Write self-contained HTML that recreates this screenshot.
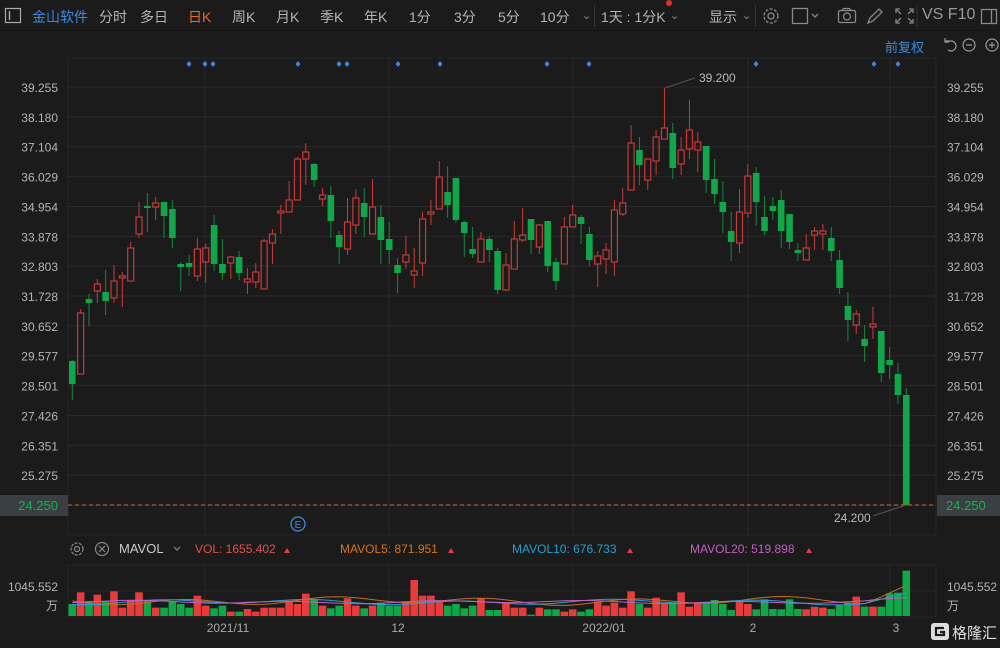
<!DOCTYPE html>
<html><head><meta charset="utf-8"><style>
*{margin:0;padding:0;box-sizing:border-box}
body{width:1000px;height:648px;background:#1b1b1b;overflow:hidden;font-family:"Liberation Sans","Noto Sans CJK SC",sans-serif;position:relative;color:#b4b4b4}
.top{position:absolute;left:0;top:0;width:1000px;height:31px;background:#1b1b1b;border-bottom:1px solid #141414;font-size:14px}
.top span{position:absolute;top:7px;white-space:nowrap}
.sep{position:absolute;top:5px;width:1px;height:22px;background:#333}
svg{position:absolute;left:0;top:0}
</style></head><body>
<div class="top">
<svg width="24" height="31" style="left:0"><rect x="5.5" y="8.5" width="15" height="14" fill="none" stroke="#aaa" stroke-width="1.2"/><line x1="9.5" y1="11" x2="9.5" y2="20" stroke="#aaa" stroke-width="1.4"/></svg>
<span style="left:32px;color:#3d8ae0">金山软件</span>
<span style="left:99px">分时</span><span style="left:140px">多日</span>
<span style="left:188px;color:#ee6a1c">日K</span>
<span style="left:232px">周K</span><span style="left:276px">月K</span><span style="left:320px">季K</span><span style="left:364px">年K</span>
<span style="left:409px">1分</span><span style="left:454px">3分</span><span style="left:498px">5分</span><span style="left:540px">10分</span>
<span style="left:582px;color:#888;font-size:11px;top:9px">⌄</span>
<div class="sep" style="left:594px"></div>
<span style="left:601px">1天 : 1分K</span><span style="left:670px;color:#888;font-size:11px;top:9px">⌄</span>
<div style="position:absolute;left:666px;top:0;width:6px;height:6px;border-radius:3px;background:#e03030"></div>
<span style="left:709px">显示</span><span style="left:742px;color:#888;font-size:11px;top:9px">⌄</span>
<div class="sep" style="left:755px"></div>
<svg width="1000" height="31">
<g fill="none" stroke="#888" stroke-width="1.3">
<circle cx="771" cy="16" r="3"/><circle cx="771" cy="16" r="7" stroke-dasharray="3 1.5"/>
<rect x="792.5" y="8.5" width="15" height="15"/><path d="M812 14l3 3 3-3"/>
<rect x="838.5" y="10.5" width="17" height="12" rx="1.5"/><circle cx="847" cy="16.5" r="3.5"/><path d="M842 10.5l1.5-2h6l1.5 2"/>
<path d="M868 23l2-5 9-9 3 3-9 9z"/>
<path d="M896 13v-4h4M909 9h4v4M896 19v4h4M913 19v4h-4M897 10l4 4M912 10l-4 4M897 22l4-4M912 22l-4-4"/>
<rect x="981.5" y="9.5" width="15" height="14"/><line x1="991.5" y1="10" x2="991.5" y2="23"/>
</g><line x1="917" y1="5" x2="917" y2="27" stroke="#333"/></svg>
<span style="left:922px;font-size:16px;top:6px;color:#999">VS F10</span>
</div>
<div style="position:absolute;left:885px;top:37px;font-size:13px;color:#3d8ae0">前复权</div>
<svg width="1000" height="648" id="s"></svg>
<script>
var NS="http://www.w3.org/2000/svg",s=document.getElementById('s'),h='';
function t(x,y,txt,c,a,fs){h+='<text x="'+x+'" y="'+y+'" fill="'+(c||'#b4b4b4')+'" font-size="'+(fs||12)+'" text-anchor="'+(a||'start')+'" font-family="Liberation Sans, Noto Sans CJK SC, sans-serif">'+txt+'</text>';}
// icons top right
h+='<g fill="none" stroke="#999" stroke-width="1.2"><path d="M945 41h6a5 5 0 1 1-3 9"/><path d="M945 38v4h4"/><circle cx="969" cy="45" r="6"/><path d="M966 45h6"/><circle cx="992" cy="45" r="6"/><path d="M989 45h6M992 42v6"/></g>';
// panel borders
h+='<rect x="68" y="58" width="868" height="477" fill="none" stroke="#262626"/>';
h+='<rect x="68" y="565" width="868" height="52" fill="none" stroke="#262626"/>';
var labs=['39.255','38.180','37.104','36.029','34.954','33.878','32.803','31.728','30.652','29.577','28.501','27.426','26.351','25.275'];
for(var i=0;i<labs.length;i++){var y=87+i*29.86;h+='<line x1="68" y1="'+y+'" x2="936" y2="'+y+'" stroke="#2a2a2a"/>';t(58,y+5,labs[i],'#b4b4b4','end');t(947,y+5,labs[i]);}
h+='<line x1="68" y1="505" x2="936" y2="505" stroke="#2a2a2a"/>';
[205,389,573,748,890].forEach(function(x){h+='<line x1="'+x+'" y1="58" x2="'+x+'" y2="535" stroke="#2a2a2a"/><line x1="'+x+'" y1="565" x2="'+x+'" y2="617" stroke="#2a2a2a"/>';});
h+='<line x1="68" y1="591" x2="936" y2="591" stroke="#262626"/>';
// diamonds
[189,205,213,298,339,347,398,440,547,589,756,874,898].forEach(function(x){h+='<path d="M'+x+' 61l2.5 3-2.5 3-2.5-3z" fill="#3d8ae0"/>';});
// candles: [type, bodyTop, bodyBot, wickTop, wickBot]
var C=[['g',361,384,360,400],['r',313,374,309,374],['g',299,303,294,326],['r',284,291,279,303],['g',292,301,270,315],['r',281,298,265,303],['r',276,278,272,307],['r',248,281,242,281],['r',217,234,202,238],['g',206,208,193,232],['r',203,207,197,220],['g',202,216,202,238],['g',209,238,200,248],['g',264,267,262,291],['g',263,267,255,276],['r',249,276,238,281],['r',248,262,244,283],['g',225,264,215,271],['g',264,273,239,280],['r',257,263,256,279],['g',257,273,251,280],['r',279,282,268,294],['r',272,282,263,288],['r',241,289,239,289],['r',234,243,229,264],['r',211,213,205,234],['r',200,212,181,212],['r',159,200,157,200],['r',152,159,143,185],['g',164,180,163,187],['r',195,199,188,206],['g',195,221,186,238],['g',235,247,231,264],['r',222,249,198,255],['r',198,225,189,234],['g',203,217,188,237],['r',207,234,179,234],['g',217,240,205,264],['g',239,250,222,264],['g',265,273,258,293],['r',255,262,236,269],['r',271,275,248,288],['r',219,263,212,276],['r',212,214,200,225],['r',177,209,161,209],['g',192,205,166,218],['g',178,220,178,223],['g',222,233,221,257],['g',249,254,227,258],['r',239,262,232,262],['g',239,250,236,262],['g',251,290,248,294],['r',265,290,253,291],['r',239,269,221,269],['r',235,240,208,242],['g',219,240,219,254],['r',225,247,224,254],['g',221,266,221,272],['g',262,281,258,290],['r',227,264,217,264],['r',215,227,205,227],['g',217,224,215,244],['g',234,260,227,266],['r',256,264,251,287],['r',250,259,243,274],['r',210,262,200,276],['r',203,214,188,216],['r',143,190,125,190],['g',150,165,137,185],['r',159,180,159,190],['r',137,161,130,175],['r',128,139,88,139],['g',133,168,123,179],['r',150,164,137,175],['r',130,149,100,159],['r',142,150,132,172],['g',146,180,146,193],['g',179,194,159,204],['g',202,212,181,233],['g',231,242,212,261],['r',212,243,189,253],['r',176,213,164,218],['g',173,202,167,226],['g',217,231,196,235],['g',206,211,197,220],['g',200,231,190,248],['g',214,242,214,249],['g',250,253,243,261],['r',248,260,234,260],['r',231,235,227,250],['r',231,234,224,250],['g',238,251,227,261],['g',260,288,250,294],['g',306,320,292,341],['r',314,325,310,334],['g',339,346,325,362],['r',324,327,307,339],['g',331,373,331,382],['g',360,365,347,379],['g',374,395,363,404],['g',395,505,388,505]];
var V=[222,187,213,194,213,184,233,210,187,210,233,233,215,222,233,197,227,235,227,245,245,237,245,233,233,233,215,222,191,208,227,235,227,205,227,235,227,218,227,227,215,150,197,197,212,227,222,235,227,205,240,240,218,233,233,254,233,238,238,245,238,245,238,215,227,218,233,184,222,233,203,222,218,187,230,220,218,210,222,240,212,222,238,208,237,238,208,237,238,230,233,237,225,218,200,230,230,230,190,188,122];
var G='#12a64a',R='#e83c3c',RC='#c83a3a';
for(var i=0;i<C.length;i++){var c=C[i],x=72.3+i*8.34;
 if(c[0]=='g'){h+='<line x1="'+x+'" y1="'+c[3]+'" x2="'+x+'" y2="'+c[4]+'" stroke="#15883f"/><rect x="'+(x-3.3)+'" y="'+c[1]+'" width="6.6" height="'+Math.max(2,c[2]-c[1])+'" fill="'+G+'"/>';}
 else{h+='<line x1="'+x+'" y1="'+c[3]+'" x2="'+x+'" y2="'+c[1]+'" stroke="'+RC+'"/><line x1="'+x+'" y1="'+c[2]+'" x2="'+x+'" y2="'+c[4]+'" stroke="'+RC+'"/><rect x="'+(x-3)+'" y="'+c[1]+'" width="6" height="'+Math.max(1.5,c[2]-c[1])+'" fill="none" stroke="'+RC+'" stroke-width="1.2"/>';}
 var vt=530+V[i]/3;h+='<rect x="'+(x-3.8)+'" y="'+vt+'" width="7.6" height="'+(616-vt)+'" fill="'+(c[0]=='g'?G:R)+'"/>';}
// MA lines
function ml(col,base,amp,ph,end){var p=[];for(var i=0;i<101;i++){var x=72.3+i*8.34;var y=base+amp*Math.sin(i*0.35+ph)+amp*0.5*Math.sin(i*0.13+ph*2);if(i>95)y-= (i-95)*end;p.push(x.toFixed(1)+','+y.toFixed(1));}h+='<polyline points="'+p.join(' ')+'" fill="none" stroke="'+col+'" stroke-width="1"/>';}
ml('#c07020',601,3,0,3);ml('#2a9fd0',602,2,1,1.5);ml('#c060c0',602,1.2,2,0.6);
// price line
h+='<line x1="68" y1="505" x2="936" y2="505" stroke="#b85a1e" stroke-dasharray="4 3" stroke-width="1.3"/>';
h+='<rect x="0" y="495" width="68" height="21" fill="#3a3f44"/>';t(58,510,'24.250','#19b050','end',13);
h+='<rect x="937" y="495" width="63" height="21" fill="#3a3f44"/>';t(946,510,'24.250','#19b050','start',13);
h+='<line x1="873" y1="516" x2="906" y2="505" stroke="#555"/>';t(834,522,'24.200','#bbb');
h+='<line x1="665" y1="88" x2="695" y2="78" stroke="#555"/>';t(699,82,'39.200','#bbb');
h+='<circle cx="298" cy="524" r="7" fill="none" stroke="#3d8ae0" stroke-width="1.3"/>';t(298,528,'E','#3d8ae0','middle',10);
// volume header
h+='<g fill="none" stroke="#888" stroke-width="1.2"><circle cx="77" cy="549" r="2.5"/><circle cx="77" cy="549" r="6" stroke-dasharray="3 1.3"/><circle cx="102" cy="549" r="6.5"/><path d="M99 546l6 6M105 546l-6 6"/><path d="M174 547l3 3 3-3"/></g>';
t(119,553,'MAVOL','#ccc','start',13);
t(195,553,'VOL: 1655.402','#e05050','start',12);h+='<path d="M284 553l3-5 3 5z" fill="#e83c3c"/>';
t(340,553,'MAVOL5: 871.951','#d6761e','start',12);h+='<path d="M448 553l3-5 3 5z" fill="#e83c3c"/>';
t(512,553,'MAVOL10: 676.733','#2a9fd0','start',12);h+='<path d="M627 553l3-5 3 5z" fill="#e83c3c"/>';
t(690,553,'MAVOL20: 519.898','#c060c0','start',12);h+='<path d="M806 553l3-5 3 5z" fill="#e83c3c"/>';
t(58,591,'1045.552','#b4b4b4','end');t(58,610,'万','#b4b4b4','end');
t(947,591,'1045.552');t(947,610,'万');
t(228,632,'2021/11','#aaa','middle');t(398,632,'12','#aaa','middle');t(604,632,'2022/01','#aaa','middle');t(753,632,'2','#aaa','middle');t(896,632,'3','#aaa','middle');
// watermark
h+='<rect x="931" y="623" width="18" height="17" rx="3" fill="#ddd"/><path d="M944 628h-8v7h8v-3h-4" fill="none" stroke="#1b1b1b" stroke-width="2.2"/>';
t(952,638,'格隆汇','#ddd','start',15);
s.innerHTML=h;
</script>
</body></html>
